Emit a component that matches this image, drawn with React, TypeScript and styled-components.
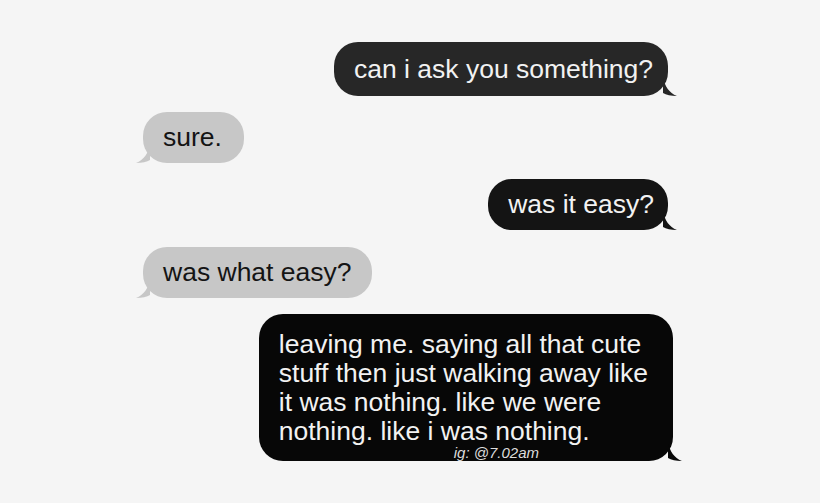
import React from "react";
import styled, { createGlobalStyle } from "styled-components";

const Global = createGlobalStyle`
  html, body { margin: 0; padding: 0; background: #f5f5f5; }
  body { font-family: "Liberation Sans", Arial, sans-serif; }
`;

const Page = styled.div`
  width: 820px;
  height: 503px;
  background: #f5f5f5;
  box-sizing: border-box;
  padding: 42px 152px 0 143px;
  display: flex;
  flex-direction: column;
  gap: 16px;
`;

const Row = styled.div<{ $sent?: boolean; $shift?: number; $top?: number }>`
  display: flex;
  justify-content: ${(p) => (p.$sent ? "flex-end" : "flex-start")};
  margin-right: ${(p) => -(p.$shift ?? 0)}px;
  margin-top: ${(p) => p.$top ?? 0}px;
`;

const Bubble = styled.div<{ $sent?: boolean; $bg: string; $h?: number; $pr?: number }>`
  position: relative;
  background: ${(p) => p.$bg};
  color: ${(p) => (p.$sent ? "#f2f2f2" : "#141414")};
  font-size: 26.5px;
  line-height: 29px;
  border-radius: 24px;
  padding: 11px ${(p) => p.$pr ?? 16}px 11px 20px;
  min-height: ${(p) => p.$h ?? 0}px;
  box-sizing: border-box;
  display: flex;
  flex-direction: column;
  justify-content: center;
  white-space: nowrap;
`;

const Tail = styled.svg<{ $sent?: boolean }>`
  position: absolute;
  bottom: 0;
  width: 14px;
  height: 18px;
  ${(p) => (p.$sent ? "right: -9px;" : "left: -7px; transform: scaleX(-1);")}
`;

const Line = styled.span`
  display: block;
`;

const Stamp = styled.span`
  position: absolute;
  left: 195px;
  bottom: 1px;
  font-size: 15px;
  line-height: 15px;
  font-style: italic;
  color: #dcdcdc;
`;

function BubbleTail({ sent, color }: { sent?: boolean; color: string }) {
  return (
    <Tail $sent={sent} viewBox="0 0 14 18">
      <path d="M0 0 C 2 8, 6 15, 14 18 C 8 18, 3 17, 0 15 Z" fill={color} />
    </Tail>
  );
}

export default function App() {
  const dark1 = "#272727";
  const dark2 = "#141414";
  const dark3 = "#070707";
  const gray = "#c7c7c7";
  return (
    <>
      <Global />
      <Page>
        <Row $sent>
          <Bubble $sent $bg={dark1} $h={54} $pr={15}>
            can i ask you something?
            <BubbleTail sent color={dark1} />
          </Bubble>
        </Row>
        <Row>
          <Bubble $bg={gray} $h={51} $pr={22}>
            sure.
            <BubbleTail color={gray} />
          </Bubble>
        </Row>
        <Row $sent>
          <Bubble $sent $bg={dark2} $h={48} $pr={14}>
            was it easy?
            <BubbleTail sent color={dark2} />
          </Bubble>
        </Row>
        <Row $top={1}>
          <Bubble $bg={gray} $h={50} $pr={20}>
            was what easy?
            <BubbleTail color={gray} />
          </Bubble>
        </Row>
        <Row $sent $shift={5}>
          <Bubble $sent $bg={dark3} $h={147} $pr={25}>
            <Line>leaving me. saying all that cute</Line>
            <Line>stuff then just walking away like</Line>
            <Line>it was nothing. like we were</Line>
            <Line>nothing. like i was nothing.</Line>
            <Stamp>ig: @7.02am</Stamp>
            <BubbleTail sent color={dark3} />
          </Bubble>
        </Row>
      </Page>
    </>
  );
}
